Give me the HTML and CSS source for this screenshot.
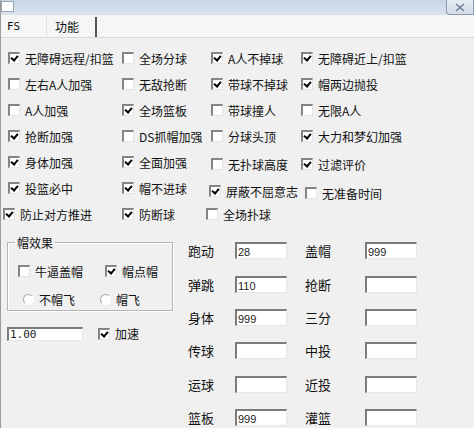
FILE: index.html
```html
<!DOCTYPE html>
<html lang="zh-CN">
<head>
  <meta charset="UTF-8">
  <meta name="viewport" content="width=device-width, initial-scale=1.0">
  <title>功能</title>
  <link rel="stylesheet" href="styles.css">
</head>
<body>
  <div class="window">
    <div class="titlebar">
      <span class="app-icon"></span>
      <span class="close-btn">
        <svg width="12" height="9" viewBox="0 0 12 9">
          <path d="M2 1 L10 8 M10 1 L2 8" stroke="#6f7f94" stroke-width="1.6" fill="none"/>
        </svg>
      </span>
    </div>

    <div class="tabs">
      <span class="tab">FS</span>
      <span class="tab tab-active">功能</span>
    </div>

    <div class="panel">
      <!-- 选项 -->
      <div class="options">
        <label class="opt"><span class="box on"></span>无障碍远程/扣篮</label>
        <label class="opt"><span class="box"></span>全场分球</label>
        <label class="opt"><span class="box on"></span>A人不掉球</label>
        <label class="opt"><span class="box on"></span>无障碍近上/扣篮</label>

        <label class="opt"><span class="box"></span>左右A人加强</label>
        <label class="opt"><span class="box"></span>无敌抢断</label>
        <label class="opt"><span class="box on"></span>带球不掉球</label>
        <label class="opt"><span class="box on"></span>帽两边抛投</label>

        <label class="opt"><span class="box"></span>A人加强</label>
        <label class="opt"><span class="box on"></span>全场篮板</label>
        <label class="opt"><span class="box"></span>带球撞人</label>
        <label class="opt"><span class="box"></span>无限A人</label>

        <label class="opt"><span class="box on"></span>抢断加强</label>
        <label class="opt"><span class="box"></span>DS抓帽加强</label>
        <label class="opt"><span class="box"></span>分球头顶</label>
        <label class="opt"><span class="box on"></span>大力和梦幻加强</label>

        <label class="opt"><span class="box on"></span>身体加强</label>
        <label class="opt"><span class="box on"></span>全面加强</label>
        <label class="opt down-2"><span class="box"></span>无扑球高度</label>
        <label class="opt down-2"><span class="box on"></span>过滤评价</label>

        <label class="opt"><span class="box on"></span>投篮必中</label>
        <label class="opt"><span class="box on"></span>帽不进球</label>
        <label class="opt down-3 left-2"><span class="box on"></span>屏蔽不屈意志</label>
        <label class="opt down-5 right-4"><span class="box"></span>无准备时间</label>

        <label class="opt left-5"><span class="box on"></span>防止对方推进</label>
        <label class="opt"><span class="box on"></span>防断球</label>
        <label class="opt left-5"><span class="box"></span>全场扑球</label>
      </div>

      <div class="lower">
        <div class="lower-left">
          <fieldset class="group">
            <legend>帽效果</legend>
            <div class="group-row">
              <label class="opt"><span class="box"></span>牛逼盖帽</label>
              <label class="opt"><span class="box on"></span>帽点帽</label>
            </div>
            <div class="group-row radios">
              <label class="opt"><span class="radio"></span>不帽飞</label>
              <label class="opt"><span class="radio"></span>帽飞</label>
            </div>
          </fieldset>
          <div class="speed-row">
            <span class="field field-wide">1.00</span>
            <label class="opt"><span class="box on"></span>加速</label>
          </div>
        </div>

        <!-- 属性 -->
        <div class="stats">
          <span class="stat-label">跑动</span><span class="field">28</span>
          <span class="stat-label">盖帽</span><span class="field">999</span>

          <span class="stat-label">弹跳</span><span class="field">110</span>
          <span class="stat-label">抢断</span><span class="field"></span>

          <span class="stat-label">身体</span><span class="field">999</span>
          <span class="stat-label">三分</span><span class="field"></span>

          <span class="stat-label">传球</span><span class="field"></span>
          <span class="stat-label">中投</span><span class="field"></span>

          <span class="stat-label">运球</span><span class="field"></span>
          <span class="stat-label">近投</span><span class="field"></span>

          <span class="stat-label">篮板</span><span class="field">999</span>
          <span class="stat-label">灌篮</span><span class="field"></span>
        </div>
      </div>
    </div>
  </div>
</body>
</html>
```

FILE: styles.css
```css
body {
  margin: 0;
  padding: 0;
  background-color: #f0f0f0;
  font-family: "Noto Sans CJK SC", "Noto Sans", sans-serif;
  font-size: 12px;
  color: #111;
}

.window {
  width: 474px;
  height: 428px;
  overflow: hidden;
  border-left: 1px solid #9a9a9a;
  box-sizing: border-box;
}

/* title bar */
.titlebar {
  height: 15px;
  display: flex;
  justify-content: space-between;
  background: linear-gradient(#c7d5e5, #dbe5ef);
}

.app-icon {
  width: 11px;
  height: 9px;
  margin-top: 1px;
  background-color: #fff;
  border: 1px solid #9aa6b4;
}

.close-btn {
  width: 26px;
  height: 14px;
  display: flex;
  align-items: center;
  justify-content: center;
  border: 1px solid #8d9cb0;
  border-top: none;
  border-radius: 0 0 0 4px;
  background: linear-gradient(#e6edf5, #d3dde9);
}

/* tabs */
.tabs {
  height: 22px;
  display: flex;
  align-items: flex-end;
  background-color: #f6f6f6;
  border-bottom: 1px solid #d8d8d8;
}

.tab {
  height: 20px;
  line-height: 20px;
  padding: 0 8px 0 6px;
  width: 31px;
  font-family: "DejaVu Sans Mono", monospace;
  font-size: 11px;
}

.tab-active {
  width: 32px;
  padding-left: 8px;
  font-family: "Noto Sans CJK SC", sans-serif;
  font-size: 12px;
  border-right: 2px solid #555;
  border-left: 1px solid #e2e2e2;
}

.panel {
  padding-top: 7px;
}

/* option checkboxes */
.options {
  display: grid;
  grid-template-columns: 114px 89px 90px 1fr;
  grid-auto-rows: 26px;
  padding-left: 7px;
}

.opt {
  display: flex;
  align-items: center;
  gap: 5px;
  white-space: nowrap;
}

.down-2 { margin-top: 4px; }
.down-3 { margin-top: 6px; }
.down-5 { margin-top: 10px; }
.left-2 { margin-left: -2px; }
.left-5 { margin-left: -5px; }
.right-4 { margin-left: 4px; }

.box {
  position: relative;
  width: 12px;
  height: 12px;
  box-sizing: border-box;
  flex-shrink: 0;
  background-color: #fff;
  border-top: 2px solid #848484;
  border-left: 2px solid #848484;
  border-right: 1px solid #e4e4e4;
  border-bottom: 1px solid #e4e4e4;
}

.box.on::after {
  content: "";
  position: absolute;
  left: 2px;
  top: 0px;
  width: 3px;
  height: 5px;
  border-right: 2px solid #000;
  border-bottom: 2px solid #000;
  transform: rotate(40deg);
}

.radio {
  width: 11px;
  height: 11px;
  box-sizing: border-box;
  border-radius: 50%;
  background-color: #fff;
  border: 1px solid #fff;
  border-top-color: #a8a8a8;
  border-left-color: #a8a8a8;
}

/* lower part */
.lower {
  display: flex;
  margin-top: 7px;
}

.lower-left {
  width: 181px;
}

.group {
  margin: 0 0 0 6px;
  padding: 6px 0 0 10px;
  width: 166px;
  height: 77px;
  box-sizing: border-box;
  border: 1px solid #b4b4b4;
  box-shadow: 1px 1px 0 #fff, inset 1px 1px 0 #fff;
}

.group legend {
  padding: 0 2px;
  margin-left: -3px;
}

.group-row {
  display: grid;
  grid-template-columns: 87px 1fr;
  height: 28px;
  align-items: center;
}

.radios {
  padding-left: 5px;
  grid-template-columns: 77px 1fr;
}

.speed-row {
  display: flex;
  align-items: center;
  gap: 15px;
  margin: 14px 0 0 6px;
}

.field {
  width: 52px;
  height: 17px;
  box-sizing: border-box;
  padding: 2px 0 0 1px;
  background-color: #fff;
  border-top: 2px solid #7b7b7b;
  border-left: 2px solid #7b7b7b;
  border-right: 1px solid #e6e6e6;
  border-bottom: 1px solid #e6e6e6;
  font-family: "Liberation Sans", sans-serif;
  font-size: 11px;
  line-height: 12px;
  color: #222;
}

.field-wide {
  width: 76px;
  height: 14px;
  padding-top: 0;
  font-family: "DejaVu Sans Mono", monospace;
}

.stats {
  display: grid;
  grid-template-columns: 47px 52px 18px 60px 52px;
  grid-auto-rows: 33.4px;
  align-items: center;
  margin-left: 6px;
}

.stat-label {
  font-size: 13px;
}

.stats .field:nth-child(4n + 2) {
  grid-column: 2;
}

.stats .stat-label:nth-child(4n + 3) {
  grid-column: 4;
}
```
